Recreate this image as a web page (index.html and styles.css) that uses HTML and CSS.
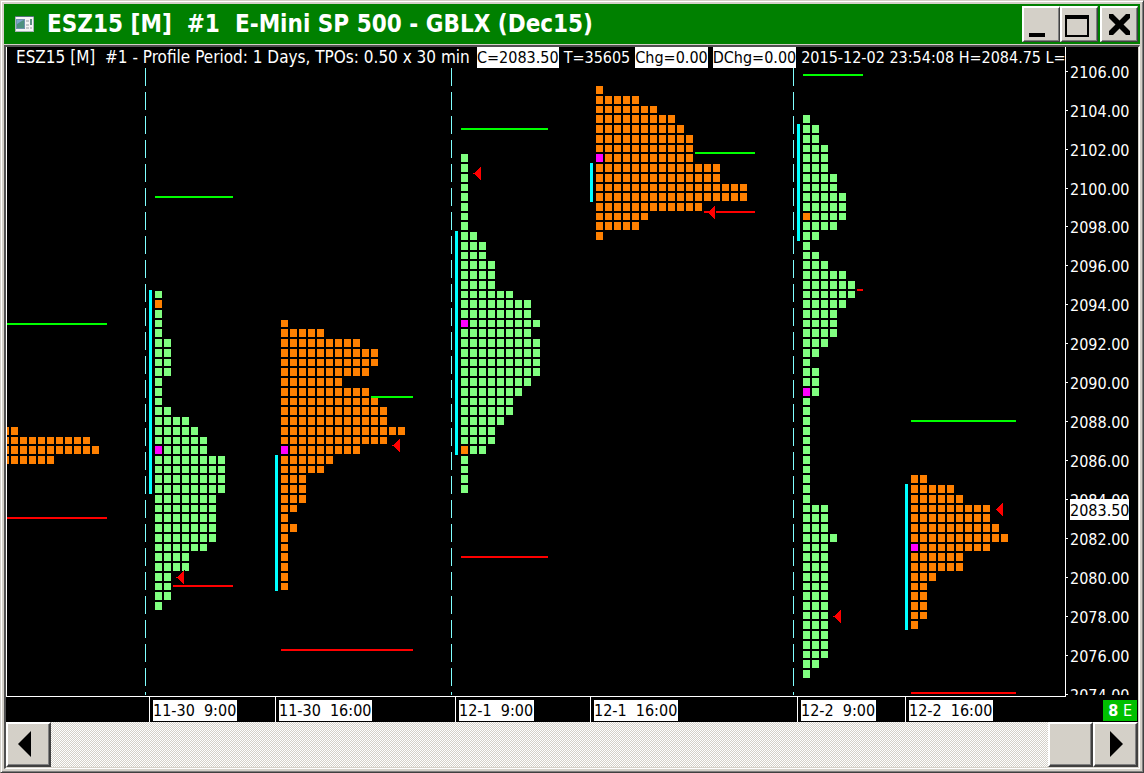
FILE: index.html
```html
<!DOCTYPE html>
<html lang="en">
<head>
    <meta charset="UTF-8">
    <meta name="viewport" content="width=device-width, initial-scale=1.0">
    <title>ESZ15 [M] #1 E-Mini SP 500 - GBLX (Dec15)</title>
    <link rel="stylesheet" href="styles.css">
</head>
<body>
    <div class="window">
        <header class="title-bar">
            <svg class="app-icon" width="19" height="16" viewBox="0 0 19 16" aria-hidden="true">
                <rect x="0" y="0" width="19" height="16" fill="#a9b4ba"/>
                <rect x="1" y="1" width="17" height="14" fill="#f4f4f6"/>
                <rect x="0" y="0" width="19" height="1" fill="#56707c"/>
                <rect x="1" y="3" width="9" height="10" fill="#6f93ad"/>
                <path d="M2 12V8l3-2 4-2v8z" fill="#4d917f"/>
                <path d="M2 4h6L2 8z" fill="#7ba6c9"/>
                <path d="M11 4h3v2h-3zM11 8h3v2h-3zM11 11h3v2h-3z" fill="#c5c8cc"/>
                <path d="M15 3h2v6h-2z" fill="#5d8f84"/>
                <path d="M15 11h2v2h-2z" fill="#c5c8cc"/>
            </svg>
            <h1>ESZ15 [M]  #1  E-Mini SP 500 - GBLX (Dec15)</h1>
            <div class="window-buttons">
                <button type="button" class="bevel" aria-label="Minimize">
                    <svg width="34" height="32" viewBox="0 0 34 32"><rect x="5" y="24" width="16" height="4"/></svg>
                </button>
                <button type="button" class="bevel" aria-label="Maximize">
                    <svg width="34" height="32" viewBox="0 0 34 32"><path d="M3 6h24v22H3zM5 10v16h20V10z" fill-rule="evenodd"/></svg>
                </button>
                <button type="button" class="bevel close" aria-label="Close">
                    <svg width="34" height="32" viewBox="0 0 34 32"><path d="M7 5h4l6.500 6.500L24 5h4v4l-6.500 6.500L28 22v4h-4l-6.500-6.500L11 26H7v-4l6.500-6.500L7 9z"/></svg>
                </button>
            </div>
        </header>

        <main class="client">
            <div class="chart">
                <div class="plot">
                    <div class="info">
                        <span class="study">ESZ15 [M]  #1 - Profile Period: 1 Days, TPOs: 0.50 x 30 min</span>
                        <span class="boxed">C=2083.50</span>
                        <span>T=35605</span>
                        <span class="boxed">Chg=0.00</span>
                        <span class="boxed">DChg=0.00</span>
                        <span>2015-12-02 23:54:08 H=2084.75 L=</span>
                    </div>
                    <svg id="profiles" class="profiles" shape-rendering="crispEdges"></svg>
                </div>
                <svg id="priceAxis" class="price-axis"></svg>
            </div>

            <div class="time-axis">
                <div id="timeMarks" class="time-marks"></div>
                <span class="status"><b>8</b> E</span>
            </div>

            <div class="scroll-bar">
                <button type="button" class="bevel" aria-label="Scroll left">
                    <svg width="41" height="41" viewBox="0 0 41 41"><path d="M23 7v26L10 20z"/></svg>
                </button>
                <input type="range" min="0" max="100" value="100" aria-label="Chart position">
                <button type="button" class="bevel" aria-label="Scroll right">
                    <svg width="41" height="41" viewBox="0 0 41 41"><path d="M15 7v26l13-13z"/></svg>
                </button>
            </div>
        </main>
    </div>

    <script src="chart.js"></script>
</body>
</html>
```
FILE: styles.css
```css
body {
    margin: 0;
    background: #d4d0c8;
    font-family: "DejaVu Sans Condensed", Tahoma, "DejaVu Sans", sans-serif;
    font-size: 16px;
}

.window {
    box-sizing: border-box;
    display: flex;
    flex-direction: column;
    min-height: 100vh;
    padding: 3px;
    border: 1px solid;
    border-color: #d4d0c8 #404040 #404040 #d4d0c8;
    box-shadow: inset 1px 1px #ffffff, inset -1px -1px #808080;
    background: #d4d0c8;
}

/* Title bar */
.title-bar {
    display: flex;
    align-items: center;
    height: 40px;
    padding: 0 2px 0 11px;
    background: #008000;
    color: #ffffff;
}

.title-bar h1 {
    flex: 1;
    min-width: 0;
    margin: 0 0 0 13px;
    overflow: hidden;
    font-size: 24px;
    line-height: 32px;
    white-space: pre;
}

.window-buttons {
    display: flex;
}

.bevel {
    box-sizing: border-box;
    flex: none;
    padding: 0;
    border: 2px solid;
    border-color: #ffffff #404040 #404040 #ffffff;
    box-shadow: inset -1px -1px #808080;
    background: #d4d0c8;
}

.bevel svg {
    display: block;
}

.window-buttons .bevel {
    width: 38px;
    height: 36px;
    border-right-width: 1px;
    border-bottom-width: 1px;
}

.window-buttons .close {
    margin-left: 2px;
}

/* Sunken client area */
.client {
    flex: 1;
    display: flex;
    flex-direction: column;
    margin-top: 1px;
    border: solid;
    border-width: 2px 1px 1px 2px;
    border-color: #505050 #ffffff #ffffff #505050;
    padding: 0 1px 1px 0;
    background: #d4d0c8;
}

.chart {
    flex: 1;
    display: flex;
    min-height: 400px;
    background: #000000;
    color: #ffffff;
}

.plot {
    flex: 1;
    display: flex;
    flex-direction: column;
    min-width: 0;
    border: solid #ffffff;
    border-width: 0 1px 1px;
    overflow: hidden;
}

.info {
    display: flex;
    gap: 5px;
    padding-left: 9px;
    line-height: 21px;
    white-space: pre;
    overflow: hidden;
}

.info span {
    flex: none;
}

.info .study {
    width: 456px;
    font-size: 17px;
}

.info .boxed {
    background: #ffffff;
    color: #000000;
}

.profiles {
    flex: 1;
    width: 100%;
    min-height: 0;
    height: 0;
}

.price-axis {
    flex: none;
    width: 72px;
    height: auto;
    margin-bottom: 2px;
    fill: #ffffff;
}

.price-axis .last-price {
    fill: #000000;
}

/* Time axis */
.time-axis {
    display: flex;
    justify-content: space-between;
    height: 25px;
    background: #000000;
    line-height: 21px;
}

.time-marks {
    display: flex;
    min-width: 0;
    overflow: hidden;
}

.time-mark {
    box-sizing: border-box;
    flex: none;
    padding: 3px 0 0 3px;
    border-left: 1px solid #ffffff;
    white-space: pre;
}

.time-mark.blank {
    border-color: transparent;
}

.time-mark span {
    display: inline-block;
    padding-right: 1px;
    background: #ffffff;
    color: #000000;
}

.status {
    flex: none;
    margin: 3px 1px 1px;
    padding: 0 5px;
    background: #00c000;
    color: #ffffff;
}

/* Scroll bar */
.scroll-bar {
    display: flex;
    height: 45px;
}

.scroll-bar .bevel {
    width: 45px;
    height: 45px;
}

.scroll-bar input {
    -webkit-appearance: none;
    appearance: none;
    flex: 1;
    min-width: 0;
    height: 45px;
    margin: 0;
    background: repeating-conic-gradient(#ffffff 0 25%, #d4d0c8 0 50%) 0 0 / 2px 2px;
}

.scroll-bar input::-webkit-slider-thumb {
    -webkit-appearance: none;
    box-sizing: border-box;
    width: 45px;
    height: 45px;
    border: 2px solid;
    border-color: #ffffff #404040 #404040 #ffffff;
    box-shadow: inset -1px -1px #808080;
    background: #d4d0c8;
}
```
FILE: chart.js
```javascript
const SVG_NS = 'http://www.w3.org/2000/svg';

const GREEN = '#80ff80';
const ORANGE = '#ff8000';
const MAGENTA = '#ff00ff';

const TOP_PRICE = 2106;
const TICK = 0.5;
const PX_PER_POINT = 19.464;
const INFO_HEIGHT = 21;
const COL_STEP = 9;
const CELL_WIDTH = 7;

// rows: TPO count per half point, from start downwards
// marks: row index -> colour of the first cell
const profiles = [
    {
        x: -5, start: 2087.5, color: ORANGE, rows: [2, 10, 11, 6], marks: {},
        high: [0, 100, 255], low: [0, 100, 449]
    },
    {
        x: 148, start: 2094.5, color: GREEN,
        rows: [1, 1, 1, 1, 1, 2, 2, 2, 2, 1, 1, 1, 2, 4, 5, 6, 6, 8, 8, 8, 8, 7, 7, 7, 7, 7, 6, 4, 4, 2, 2, 2, 1],
        marks: { 1: ORANGE, 16: MAGENTA },
        range: [222, 426], high: [148, 226, 128], low: [166, 226, 517], close: [170, 509]
    },
    {
        x: 274, start: 2093, color: ORANGE,
        rows: [1, 5, 9, 11, 11, 10, 7, 10, 11, 12, 12, 14, 12, 9, 6, 5, 3, 3, 3, 2, 1, 2, 1, 1, 1, 1, 1, 1],
        marks: { 13: MAGENTA },
        range: [387, 523], high: [364, 406, 328], low: [274, 406, 581], close: [386, 377]
    },
    {
        x: 454, start: 2101.5, color: GREEN,
        rows: [1, 1, 1, 1, 1, 1, 1, 1, 2, 3, 3, 4, 4, 4, 6, 8, 8, 9, 8, 9, 9, 9, 9, 8, 7, 6, 6, 5, 4, 4, 3, 1, 1, 1, 1],
        marks: { 17: MAGENTA, 30: ORANGE },
        range: [163, 387], high: [454, 541, 60], low: [454, 541, 488], close: [467, 105]
    },
    {
        x: 589, start: 2105, color: ORANGE,
        rows: [1, 5, 7, 9, 10, 11, 11, 11, 14, 14, 17, 17, 12, 6, 5, 1],
        marks: { 7: MAGENTA },
        range: [95, 134], high: [688, 748, 84], low: [697, 748, 143], close: [701, 144]
    },
    {
        x: 796, start: 2103.5, color: GREEN,
        rows: [1, 2, 2, 3, 3, 3, 4, 4, 5, 5, 5, 4, 2, 1, 2, 3, 5, 6, 6, 5, 4, 4, 4, 3, 2, 1, 2, 2, 2,
            1, 1, 1, 1, 1, 1, 1, 1, 1, 1, 1,
            3, 3, 3, 4, 3, 3, 3, 3, 3, 3, 3, 3, 3, 3, 3, 3, 2, 1],
        marks: { 10: ORANGE, 28: MAGENTA },
        range: [56, 173], high: [796, 856, 6], low: [850, 856, 221], close: [827, 548]
    },
    {
        x: 904, start: 2085, color: ORANGE,
        rows: [2, 5, 6, 9, 9, 10, 11, 9, 6, 6, 3, 2, 2, 2, 2, 1],
        marks: { 7: MAGENTA },
        range: [416, 562], high: [904, 1009, 352], low: [904, 1009, 624], close: [989, 441]
    }
];

const dayLines = [138, 444, 786];

const timeMarks = [
    { x: 143, label: '11-30  9:00' },
    { x: 269, label: '11-30  16:00' },
    { x: 449, label: '12-1  9:00' },
    { x: 584, label: '12-1  16:00' },
    { x: 791, label: '12-2  9:00' },
    { x: 899, label: '12-2  16:00' }
];

function add(parent, name, attrs, text) {
    const el = document.createElementNS(SVG_NS, name);
    for (const key in attrs) {
        el.setAttribute(key, attrs[key]);
    }
    if (text) {
        el.textContent = text;
    }
    parent.appendChild(el);
    return el;
}

// Top edge of the row of a price, measured from the top of the chart
function rowTop(price) {
    return Math.floor(20.22 + (TOP_PRICE - price) * PX_PER_POINT);
}

function drawProfile(svg, p) {
    p.rows.forEach((count, i) => {
        const price = p.start - i * TICK;
        const top = rowTop(price);
        const height = rowTop(price - TICK) - top - 2;
        for (let c = 0; c < count; c++) {
            const fill = c === 0 && p.marks[i] ? p.marks[i] : p.color;
            add(svg, 'rect', { x: p.x + c * COL_STEP, y: top - INFO_HEIGHT, width: CELL_WIDTH, height, fill });
        }
    });

    if (p.range) {
        add(svg, 'rect', { x: p.x - 6, y: p.range[0], width: 3, height: p.range[1] - p.range[0], fill: '#00ffff' });
    }
    add(svg, 'rect', { x: p.high[0], y: p.high[2], width: p.high[1] - p.high[0], height: 2, fill: '#00ff00' });
    add(svg, 'rect', { x: p.low[0], y: p.low[2], width: p.low[1] - p.low[0], height: 2, fill: '#ff0000' });

    if (p.close) {
        const [x, y] = p.close;
        add(svg, 'rect', { x: x + 7, y: y - 7, width: 1, height: 15, fill: '#000000' });
        add(svg, 'path', { d: `M${x - 0.5} ${y + 0.5}l7.5 -7v14z`, fill: '#ff0000' });
    }
}

function drawPriceAxis(svg) {
    for (let price = TOP_PRICE; price >= 2074; price -= 2) {
        const y = rowTop(price) + 4;
        add(svg, 'rect', { x: 0, y, width: 2, height: 1 });
        add(svg, 'text', { x: 4, y: y + 7 }, price.toFixed(2));
    }
    const y = rowTop(2083.5) + 4;
    add(svg, 'rect', { x: 4, y: y - 10, width: 59, height: 21 });
    add(svg, 'text', { x: 4, y: y + 7, class: 'last-price' }, '2083.50');
}

function drawTimeAxis(box) {
    const blank = document.createElement('div');
    blank.className = 'time-mark blank';
    blank.style.width = timeMarks[0].x + 'px';
    box.appendChild(blank);

    timeMarks.forEach((mark, i) => {
        const next = timeMarks[i + 1];
        const item = document.createElement('div');
        item.className = 'time-mark';
        if (next) {
            item.style.width = (next.x - mark.x) + 'px';
        }
        const label = document.createElement('span');
        label.textContent = mark.label;
        item.appendChild(label);
        box.appendChild(item);
    });
}

const svg = document.getElementById('profiles');
dayLines.forEach((x) => {
    add(svg, 'line', { x1: x + 0.5, y1: 0, x2: x + 0.5, y2: 627, stroke: '#80ffff', 'stroke-dasharray': '18 6' });
});
profiles.forEach((p) => drawProfile(svg, p));
drawPriceAxis(document.getElementById('priceAxis'));
drawTimeAxis(document.getElementById('timeMarks'));
```
